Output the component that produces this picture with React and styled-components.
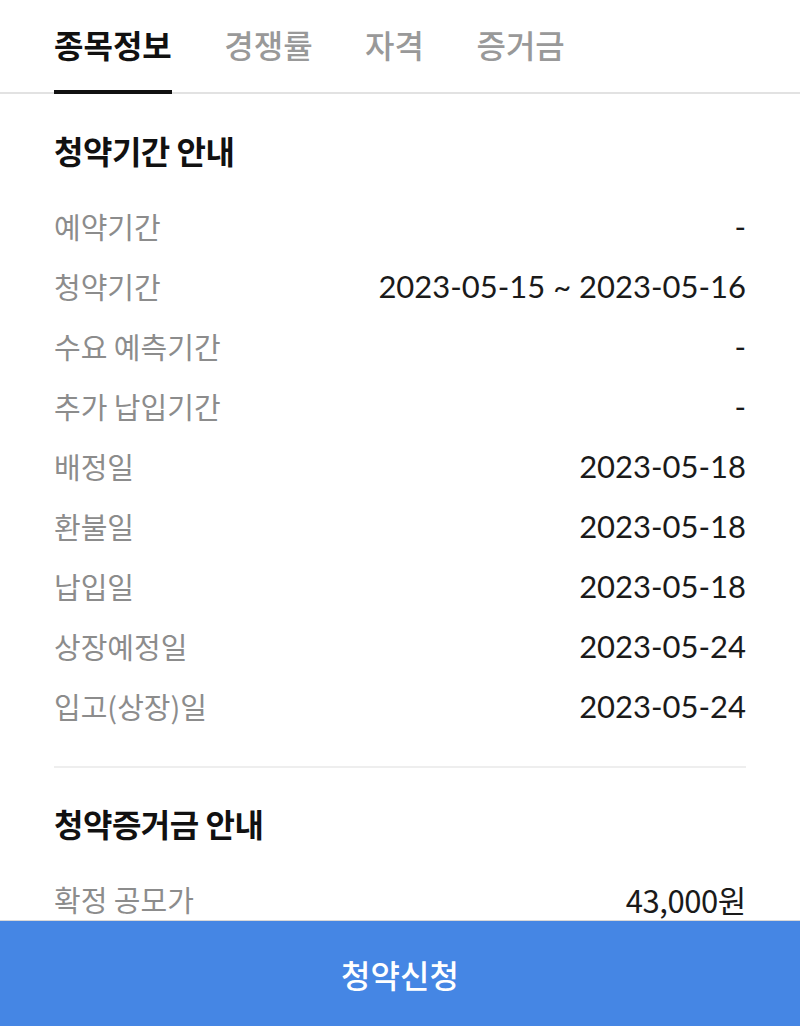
import React from 'react';
import styled, { createGlobalStyle } from 'styled-components';

const GlobalStyle = createGlobalStyle`
    html, body {
        margin: 0;
        padding: 0;
        background: #fff;
    }
    body {
        font-family: "Noto Sans CJK KR", "Noto Sans", sans-serif;
        color: #111;
    }
`

const TabBar = styled.div`
    display: flex;
    gap: 52.5px;
    padding: 0 54px;
    height: 92px;
    border-bottom: 2px solid #e2e2e2;
`

const Tab = styled.div`
    display: flex;
    align-items: center;
    box-sizing: border-box;
    height: 94px;
    margin-bottom: -2px;
    padding-bottom: 2px;
    font-size: 32px;
    font-weight: ${({ active }) => (active ? 700 : 500)};
    color: ${({ active }) => (active ? '#111' : '#999')};
    border-bottom: 4px solid ${({ active }) => (active ? '#111' : 'transparent')};
`

const Content = styled.div`
    padding: 0 54px 140px;
`

const Section = styled.section`
    padding-top: ${({ first }) => (first ? '36px' : '35px')};
    padding-bottom: 30px;
    border-bottom: ${({ last }) => (last ? 'none' : '2px solid #eeeeee')};
`

const Heading = styled.h2`
    margin: 0 0 26px;
    font-size: 32px;
    line-height: 40px;
    font-weight: 700;
    letter-spacing: -0.5px;
    color: #111;
`

const Row = styled.div`
    display: flex;
    justify-content: space-between;
    align-items: center;
    height: 60px;
`

const Label = styled.span`
    font-size: 29px;
    color: #8c8c8c;
`

const Value = styled.span`
    font-family: ${({ kr }) => (kr ? '"Noto Sans CJK KR", sans-serif' : 'Lato, "Noto Sans CJK KR", sans-serif')};
    font-size: 31px;
    letter-spacing: ${({ kr }) => (kr ? '-0.4px' : '0')};
    color: #1a1a1a;
`

const ApplyButton = styled.button`
    position: fixed;
    left: 0;
    right: 0;
    bottom: 0;
    height: 106px;
    border: none;
    border-top: 1px solid #d8d8d8;
    background: #4586e4;
    color: #fff;
    font-family: "Noto Sans CJK KR", sans-serif;
    font-size: 32px;
    font-weight: 500;
`

const tabs = ['종목정보', '경쟁률', '자격', '증거금'];

const periodRows = [
    ['예약기간', '-'],
    ['청약기간', '2023-05-15 ~ 2023-05-16'],
    ['수요 예측기간', '-'],
    ['추가 납입기간', '-'],
    ['배정일', '2023-05-18'],
    ['환불일', '2023-05-18'],
    ['납입일', '2023-05-18'],
    ['상장예정일', '2023-05-24'],
    ['입고(상장)일', '2023-05-24'],
];

const App = () => {
    return (
        <>
            <GlobalStyle />
            <TabBar>
                {tabs.map((t, i) => (
                    <Tab key={t} active={i === 0}>{t}</Tab>
                ))}
            </TabBar>
            <Content>
                <Section first>
                    <Heading>청약기간 안내</Heading>
                    {periodRows.map(([label, value]) => (
                        <Row key={label}>
                            <Label>{label}</Label>
                            <Value>{value}</Value>
                        </Row>
                    ))}
                </Section>
                <Section last>
                    <Heading>청약증거금 안내</Heading>
                    <Row>
                        <Label>확정 공모가</Label>
                        <Value kr>43,000원</Value>
                    </Row>
                    <Row>
                        <Label>청약증거금률</Label>
                        <Value kr>50%</Value>
                    </Row>
                </Section>
            </Content>
            <ApplyButton>청약신청</ApplyButton>
        </>
    )
};

export default App;
